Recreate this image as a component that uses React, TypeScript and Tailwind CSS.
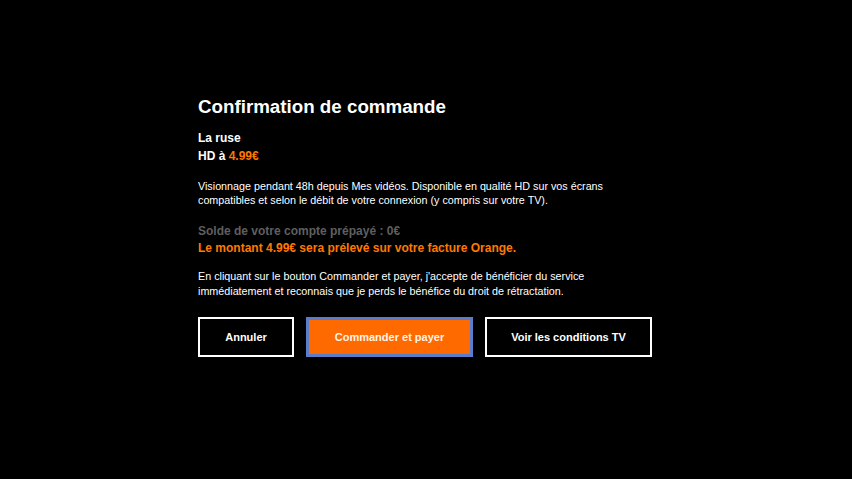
const App = () => {
  return (
    <div className="w-[852px] h-[479px] bg-black text-white overflow-hidden" style={{ fontFamily: '"Liberation Sans", Arial, sans-serif' }}>
      <div className="pl-[198px] pt-[95px] flex flex-col">
        <h1 className="text-[18.75px] font-bold leading-[24px]">Confirmation de commande</h1>
        <p className="mt-[10px] text-[12px] font-bold leading-[18px]">La ruse</p>
        <p className="text-[12px] font-bold leading-[18px]">
          HD à <span className="text-[#ff7900]">4.99€</span>
        </p>
        <p className="mt-[14px] w-[430px] text-[10.75px] leading-[14px]">
          Visionnage pendant 48h depuis Mes vidéos. Disponible en qualité HD sur vos écrans compatibles et selon le débit de votre connexion (y compris sur votre TV).
        </p>
        <p className="mt-[15px] text-[12px] font-bold leading-[18px] text-[#5f5f5f]">Solde de votre compte prépayé : 0€</p>
        <p className="text-[12px] font-bold leading-[17px] text-[#ff7900]">Le montant 4.99€ sera prélevé sur votre facture Orange.</p>
        <p className="mt-[12px] w-[430px] text-[10.75px] leading-[15px]">
          En cliquant sur le bouton Commander et payer, j'accepte de bénéficier du service immédiatement et reconnais que je perds le bénéfice du droit de rétractation.
        </p>
        <div className="mt-[18px] flex gap-[12px]">
          <button className="w-[96px] h-[40px] border-2 border-white text-[11px] font-bold">Annuler</button>
          <button className="w-[167px] h-[40px] border-[3px] border-[#5b7ccb] bg-[#ff6a00] text-[11px] font-bold text-[#fff3ea]">Commander et payer</button>
          <button className="w-[167px] h-[40px] border-2 border-white text-[11px] font-bold">Voir les conditions TV</button>
        </div>
      </div>
    </div>
  );
};

export default App;
